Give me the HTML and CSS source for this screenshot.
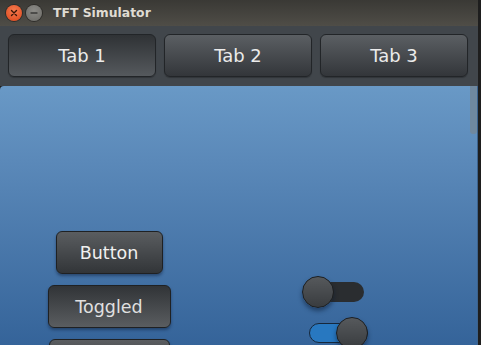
FILE: index.html
```html
<!DOCTYPE html>
<html>
<head>
<meta charset="utf-8">
<link rel="stylesheet" href="styles.css">
</head>
<body>
<div class="window">
  <div class="titlebar">
    <span class="wbtn close"><svg width="16" height="16" viewBox="0 0 16 16"><path d="M5.5 5.5 L10.5 10.5 M10.5 5.5 L5.5 10.5" stroke="#3a1608" stroke-width="1.4" stroke-linecap="round"/></svg></span>
    <span class="wbtn min"><svg width="16" height="16" viewBox="0 0 16 16"><path d="M5 8 H11" stroke="#3a3a38" stroke-width="1.4" stroke-linecap="round"/></svg></span>
    <span class="title">TFT Simulator</span>
  </div>
  <div class="tabbar">
    <div class="tab active">Tab 1</div>
    <div class="tab">Tab 2</div>
    <div class="tab">Tab 3</div>
  </div>
  <div class="panel">
    <div class="scrollbar"></div>
    <div class="btncol">
      <div class="btn b1">Button</div>
      <div class="btn b2 toggled">Toggled</div>
      <div class="btn b3"></div>
    </div>
    <div class="swcol">
      <div class="sw off"><div class="track"></div><div class="knob"></div></div>
      <div class="sw on"><div class="track"></div><div class="knob"></div></div>
    </div>
  </div>
</div>
</body>
</html>
```
FILE: styles.css
```css
html, body {
  margin: 0;
  padding: 0;
  background: #1e1e1e;
  overflow: hidden;
}
.window {
  width: 478px;
  height: 345px;
  overflow: hidden;
  display: flex;
  flex-direction: column;
  font-family: "DejaVu Sans", sans-serif;
}
.titlebar {
  height: 26px;
  flex: none;
  background: linear-gradient(#3a3935, #4f4d47);
  display: flex;
  align-items: center;
  padding-left: 6px;
  box-sizing: border-box;
}
.wbtn {
  width: 16px;
  height: 16px;
  flex: none;
  border-radius: 50%;
  display: block;
  margin-top: -1px;
}
.wbtn svg { display: block; }
.close {
  background: radial-gradient(circle at 50% 35%, #f67c50, #dd4519);
  box-shadow: 0 0 0 1px #2e2d2a;
}
.min {
  margin-left: 4px;
  background: radial-gradient(circle at 50% 35%, #8c8b87, #6a6965);
  box-shadow: 0 0 0 1px #2e2d2a;
}
.title {
  margin-left: 11px;
  color: #dfdbd2;
  font-weight: bold;
  font-size: 12.4px;
  margin-top: -1px;
}
.tabbar {
  height: 60px;
  flex: none;
  background: #41464b;
  display: flex;
  gap: 8px;
  padding: 8px 0 0 8px;
  box-sizing: border-box;
}
.tab {
  width: 148px;
  height: 43px;
  box-sizing: border-box;
  border: 1px solid #222528;
  border-radius: 6px;
  background: linear-gradient(#5b5f63, #33363a);
  color: #ebebeb;
  font-size: 18px;
  display: flex;
  align-items: center;
  justify-content: center;
  box-shadow: 0 1px 1px rgba(0,0,0,0.25);
}
.tab.active {
  background: linear-gradient(#2f3235, #55595d);
}
.panel {
  position: relative;
  flex: 1;
  background: linear-gradient(#6999c6 0%, #5b89b9 25%, #2d5c93 100%);
  border-top-left-radius: 4px;
  border-right: 1px solid #3c638e;
  display: flex;
  align-items: flex-start;
}
.scrollbar {
  position: absolute;
  right: 0;
  top: 0;
  width: 7px;
  height: 48px;
  background: #6f889f;
  border-radius: 0 0 3px 3px;
}
.btncol {
  margin-left: 48px;
  margin-top: 145px;
  width: 122px;
  display: flex;
  flex-direction: column;
  align-items: center;
  gap: 11px;
}
.btn {
  height: 43px;
  box-sizing: border-box;
  border: 1px solid #1f2123;
  border-radius: 6px;
  background: linear-gradient(#5a5d60, #323538);
  color: #f0f0f0;
  font-size: 17.5px;
  display: flex;
  align-items: center;
  justify-content: center;
  box-shadow: 0 2px 3px rgba(10,25,50,0.45);
}
.b1 { width: 107px; }
.b2 { width: 123px; }
.b3 { width: 121px; }
.btn.toggled {
  background: linear-gradient(#313437, #5a5d60);
  color: #e0e0e0;
}
.swcol {
  margin-left: 132px;
  margin-top: 190px;
  display: flex;
  flex-direction: column;
  gap: 9px;
}
.sw {
  position: relative;
  width: 62px;
  height: 32px;
}
.sw.on { margin-left: 4px; }
.track {
  position: absolute;
  left: 3px;
  right: 0;
  top: 6px;
  height: 20px;
  border-radius: 10px;
  box-sizing: border-box;
}
.off .track {
  background: #2a2d30;
}
.on .track {
  background: #2878c0;
  border: 1px solid #16283c;
}
.knob {
  position: absolute;
  top: 0;
  width: 32px;
  height: 32px;
  border-radius: 50%;
  box-sizing: border-box;
  border: 1px solid #1c1e20;
  background: linear-gradient(#56595c, #393c3f);
  box-shadow: 0 3px 4px rgba(10,25,50,0.5);
}
.off .knob { left: 0; }
.on .knob { right: 0; }
```
